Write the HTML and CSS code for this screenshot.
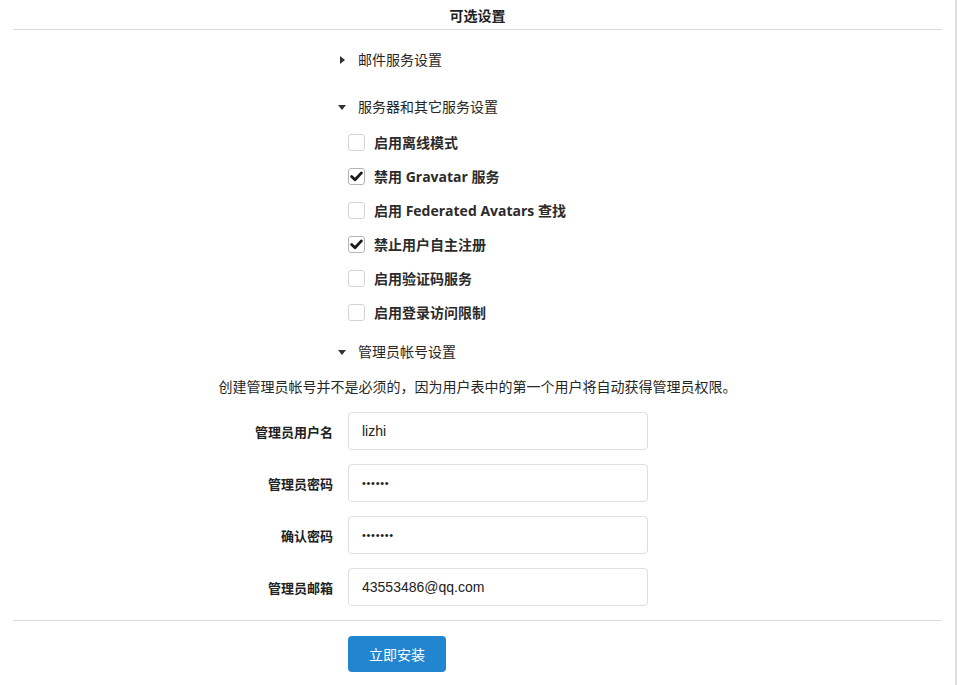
FILE: index.html
```html
<!DOCTYPE html>
<html lang="zh-CN">
<head>
<meta charset="utf-8">
<title>可选设置</title>
<link rel="stylesheet" href="styles.css">
</head>
<body>
<div class="page">
  <div class="inner">
    <h3 class="title">可选设置</h3>

    <div class="sec-head sec-first"><span class="tri tri-right"></span><span>邮件服务设置</span></div>
    <div class="sec-head sec-second"><span class="tri tri-down"></span><span>服务器和其它服务设置</span></div>

    <div class="checks">
      <label class="check"><span class="box"></span><span class="ctext">启用离线模式</span></label>
      <label class="check"><span class="box checked"><svg viewBox="0 0 17 17" width="17" height="17"><path d="M3.6 8.6 L7 11.8 L13.4 4.9" fill="none" stroke="#1a1a1a" stroke-width="2.8" stroke-linecap="round" stroke-linejoin="round"/></svg></span><span class="ctext">禁用 Gravatar 服务</span></label>
      <label class="check"><span class="box"></span><span class="ctext">启用 Federated Avatars 查找</span></label>
      <label class="check"><span class="box checked"><svg viewBox="0 0 17 17" width="17" height="17"><path d="M3.6 8.6 L7 11.8 L13.4 4.9" fill="none" stroke="#1a1a1a" stroke-width="2.8" stroke-linecap="round" stroke-linejoin="round"/></svg></span><span class="ctext">禁止用户自主注册</span></label>
      <label class="check"><span class="box"></span><span class="ctext">启用验证码服务</span></label>
      <label class="check"><span class="box"></span><span class="ctext">启用登录访问限制</span></label>
    </div>

    <div class="sec-head sec-third"><span class="tri tri-down"></span><span>管理员帐号设置</span></div>

    <p class="desc">创建管理员帐号并不是必须的，因为用户表中的第一个用户将自动获得管理员权限。</p>

    <div class="fields">
      <label class="flabel">管理员用户名</label>
      <input class="finput" type="text" value="lizhi">
      <label class="flabel">管理员密码</label>
      <input class="finput pw" type="text" value="••••••">
      <label class="flabel">确认密码</label>
      <input class="finput pw" type="text" value="•••••••">
      <label class="flabel">管理员邮箱</label>
      <input class="finput" type="text" value="43553486@qq.com">
    </div>

    <div class="divider"></div>

    <div class="actions">
      <button class="btn">立即安装</button>
    </div>
  </div>
</div>
</body>
</html>
```

FILE: styles.css
```css
html, body {
  margin: 0;
  padding: 0;
  background: #fff;
}
body {
  font-family: Lato, "Noto Sans CJK SC", sans-serif;
  font-size: 14px;
  color: #212121;
}
.page {
  width: 955px;
  height: 685px;
  border-right: 2px solid #e0e0e0;
  overflow: hidden;
}
.inner {
  margin-left: 13px;
  width: 929px;
}
.title {
  margin: 0;
  padding: 6px 0 3px;
  line-height: 20px;
  font-size: 14px;
  font-weight: 700;
  text-align: center;
  border-bottom: 1px solid #dcdcdc;
}
.sec-head {
  display: flex;
  align-items: center;
  height: 20px;
  line-height: 20px;
  margin-left: 325px;
  color: #262626;
}
.sec-first { margin-top: 20px; }
.sec-second { margin-top: 27px; }
.sec-third { margin-top: 20px; }
.tri {
  width: 8px;
  margin-right: 12px;
  display: flex;
  justify-content: center;
}
.tri::before {
  content: "";
  display: block;
  width: 0;
  height: 0;
}
.tri-right::before {
  border-left: 5px solid #333;
  border-top: 4px solid transparent;
  border-bottom: 4px solid transparent;
}
.tri-down::before {
  border-top: 5px solid #333;
  border-left: 4px solid transparent;
  border-right: 4px solid transparent;
}
.checks {
  margin-top: 15px;
  margin-left: 335px;
  display: flex;
  flex-direction: column;
  gap: 14px;
}
.check {
  display: flex;
  align-items: center;
  height: 20px;
}
.box {
  width: 15px;
  height: 15px;
  border: 1px solid #d4d4d5;
  border-radius: 3px;
  position: relative;
  margin-right: 9px;
  background: #fff;
}
.box.checked {
  border-color: #b5b5b5;
}
.box svg {
  position: absolute;
  left: -1px;
  top: -1px;
}
.ctext {
  font-family: "Open Sans", "Noto Sans CJK SC", sans-serif;
  font-weight: 700;
  color: #2b2b2b;
}
.desc {
  margin: 15px 0 0;
  line-height: 20px;
  text-align: center;
  color: #262626;
}
.fields {
  margin-top: 15px;
  display: grid;
  grid-template-columns: 320px 300px;
  column-gap: 15px;
  row-gap: 14px;
  align-items: center;
}
.flabel {
  text-align: right;
  font-size: 13px;
  font-weight: 700;
  color: #212121;
}
.finput {
  box-sizing: border-box;
  width: 300px;
  height: 38px;
  margin: 0;
  padding: 0 13px;
  border: 1px solid #dedede;
  border-radius: 4px;
  font-family: "Liberation Sans", Arial, sans-serif;
  font-size: 14px;
  color: #212121;
  background: #fff;
  outline: none;
}
.finput.pw {
  font-size: 11px;
  letter-spacing: 0.7px;
}
.divider {
  margin-top: 14px;
  height: 0;
  border-top: 1px solid #dcdcdc;
}
.actions {
  margin-top: 15px;
  padding-left: 335px;
}
.btn {
  width: 98px;
  height: 36px;
  border: none;
  border-radius: 4px;
  background: #2185d0;
  color: #fff;
  font-family: Lato, "Noto Sans CJK SC", sans-serif;
  font-size: 14px;
  font-weight: 400;
  padding: 0;
  cursor: pointer;
}
```
